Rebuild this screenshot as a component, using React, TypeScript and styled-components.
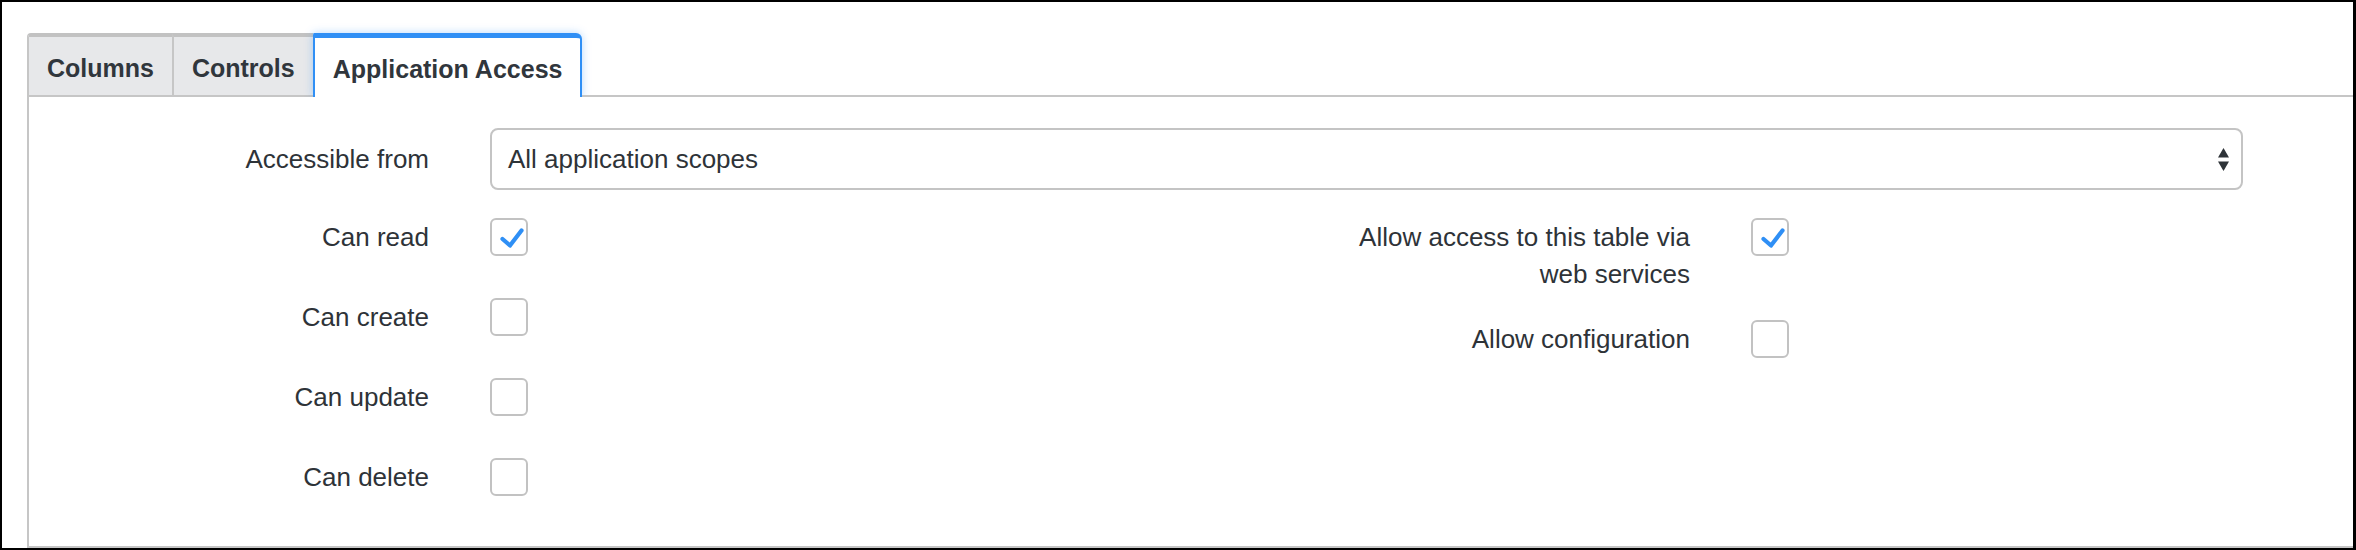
import styled, { createGlobalStyle, css } from "styled-components";

const GlobalStyle = createGlobalStyle`
  html, body {
    margin: 0;
    padding: 0;
    background: #ffffff;
  }
  body {
    font-family: "Liberation Sans", Arial, sans-serif;
    color: #2e3338;
  }
  * {
    box-sizing: border-box;
  }
`;

type checkItem = { label: string; checked: boolean };

const leftItems: checkItem[] = [
  { label: "Can read", checked: true },
  { label: "Can create", checked: false },
  { label: "Can update", checked: false },
  { label: "Can delete", checked: false },
];

const rightItems: checkItem[] = [
  { label: "Allow access to this table via web services", checked: true },
  { label: "Allow configuration", checked: false },
];

const tabs = ["Columns", "Controls", "Application Access"];

function CheckMark() {
  return (
    <svg width="34" height="34" viewBox="0 0 34 34">
      <polyline
        points="10.5,19 18,25.5 29.5,10.5"
        fill="none"
        stroke="#2f8ff5"
        strokeWidth="4.2"
        strokeLinecap="round"
        strokeLinejoin="round"
      />
    </svg>
  );
}

function SelectArrows() {
  return (
    <svg width="11" height="23" viewBox="0 0 11 23">
      <polygon points="5.5,0 11,9.5 0,9.5" fill="#2e3338" />
      <polygon points="0,13.5 11,13.5 5.5,23" fill="#2e3338" />
    </svg>
  );
}

export default function App() {
  return (
    <>
      <GlobalStyle />
      <Frame>
        <TabBar>
          {tabs.map((t) => (
            <Tab key={t} $active={t === "Application Access"}>
              {t}
            </Tab>
          ))}
          <TabFiller />
        </TabBar>
        <Panel>
          <SelectRow>
            <FieldLabel>Accessible from</FieldLabel>
            <Select>
              <span>All application scopes</span>
              <SelectArrows />
            </Select>
          </SelectRow>
          <Columns>
            <CheckColumn $gap={42}>
              {leftItems.map((it) => (
                <CheckRow key={it.label} $labelWidth={400}>
                  <CheckLabel>{it.label}</CheckLabel>
                  <CheckBox>{it.checked && <CheckMark />}</CheckBox>
                </CheckRow>
              ))}
            </CheckColumn>
            <CheckColumn $gap={27}>
              {rightItems.map((it) => (
                <CheckRow key={it.label} $labelWidth={360}>
                  <CheckLabel>{it.label}</CheckLabel>
                  <CheckBox>{it.checked && <CheckMark />}</CheckBox>
                </CheckRow>
              ))}
            </CheckColumn>
          </Columns>
        </Panel>
      </Frame>
    </>
  );
}

const Frame = styled.div`
  width: 2356px;
  height: 550px;
  border-style: solid;
  border-color: #000000;
  border-width: 2px 3px 2px 2px;
  padding: 31px 0 0 25px;
  display: flex;
  flex-direction: column;
  background: #ffffff;
`;

const TabBar = styled.div`
  display: flex;
  height: 64px;
  flex-shrink: 0;
`;

const Tab = styled.div<{ $active?: boolean }>`
  display: flex;
  align-items: center;
  padding: 4px 18px 0;
  font-size: 25px;
  font-weight: 700;
  color: #30363c;
  white-space: nowrap;
  ${({ $active }) =>
    $active
      ? css`
          background: #ffffff;
          border: 2px solid #2f8ff5;
          border-top-width: 5px;
          border-bottom: none;
          border-radius: 2px 6px 0 0;
          box-shadow: 0 0 8px rgba(47, 143, 245, 0.35);
        `
      : css`
          background: #e7e8ea;
          border-top: 4px solid #c2c2c2;
          border-left: 2px solid #c6c6c6;
          border-bottom: 2px solid #c6c6c6;
          &:first-child {
            border-top-left-radius: 4px;
          }
        `}
`;

const TabFiller = styled.div`
  flex: 1;
  border-bottom: 2px solid #c6c6c6;
`;

const Panel = styled.div`
  flex: 1;
  background: #ffffff;
  border-left: 2px solid #c6c6c6;
  border-bottom: 2px solid #c6c6c6;
  padding-top: 31px;
`;

const SelectRow = styled.div`
  display: grid;
  grid-template-columns: 400px 1fr;
  column-gap: 61px;
  align-items: center;
  padding-right: 110px;
`;

const FieldLabel = styled.div`
  text-align: right;
  font-size: 26px;
  line-height: 37px;
`;

const Select = styled.div`
  height: 62px;
  border: 2px solid #c4c4c4;
  border-radius: 8px;
  padding: 0 12px 0 16px;
  display: flex;
  align-items: center;
  justify-content: space-between;
  font-size: 26px;
  color: #2e3338;
`;

const Columns = styled.div`
  display: grid;
  grid-template-columns: 1301px 1fr;
  margin-top: 28px;
`;

const CheckColumn = styled.div<{ $gap: number }>`
  display: flex;
  flex-direction: column;
  gap: ${({ $gap }) => $gap}px;
`;

const CheckRow = styled.div<{ $labelWidth: number }>`
  display: grid;
  grid-template-columns: ${({ $labelWidth }) => $labelWidth}px 38px;
  column-gap: 61px;
  align-items: start;
`;

const CheckLabel = styled.div`
  text-align: right;
  font-size: 26px;
  line-height: 37px;
  padding-top: 1px;
`;

const CheckBox = styled.div`
  width: 38px;
  height: 38px;
  border: 2px solid #c2c2c2;
  border-radius: 6px;
  background: #ffffff;
  display: flex;
  align-items: center;
  justify-content: center;
`;
